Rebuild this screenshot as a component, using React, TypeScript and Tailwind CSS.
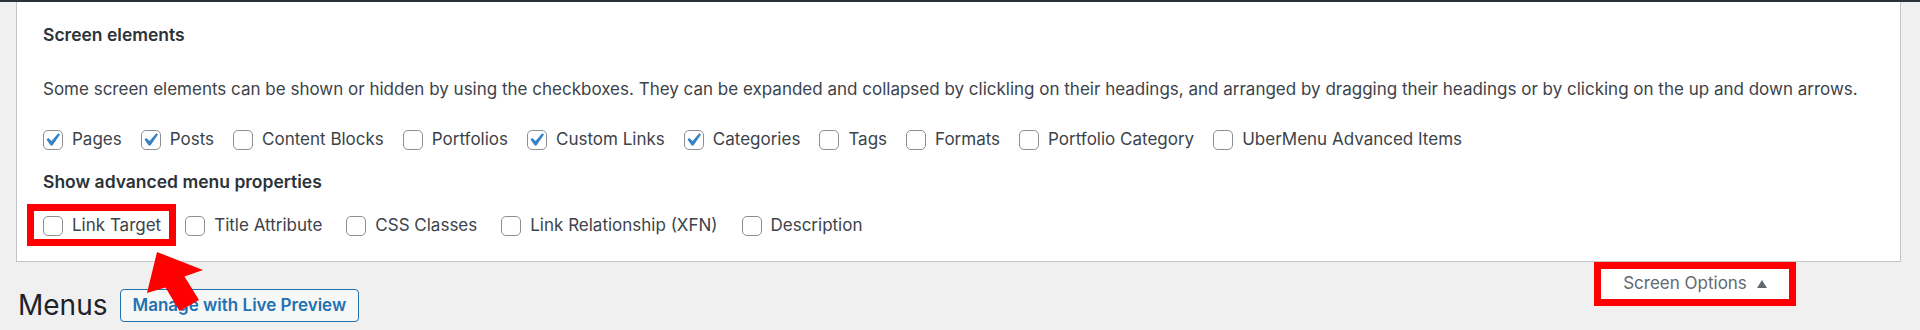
import React from "react";

type Item = { label: string; checked?: boolean; highlight?: boolean };

const screenElements: Item[] = [
  { label: "Pages", checked: true },
  { label: "Posts", checked: true },
  { label: "Content Blocks" },
  { label: "Portfolios" },
  { label: "Custom Links", checked: true },
  { label: "Categories", checked: true },
  { label: "Tags" },
  { label: "Formats" },
  { label: "Portfolio Category" },
  { label: "UberMenu Advanced Items" },
];

const advanced: Item[] = [
  { label: "Link Target", highlight: true },
  { label: "Title Attribute" },
  { label: "CSS Classes" },
  { label: "Link Relationship (XFN)" },
  { label: "Description" },
];

function Checkbox({ checked }: { checked?: boolean }) {
  return (
    <span className="relative block w-[20px] h-[20px] shrink-0 rounded-[5px] border border-[#8c8f94] bg-white">
      {checked && (
        <svg viewBox="0 0 20 20" className="absolute -top-[4px] -left-[5px] w-[26px] h-[26px]">
          <path d="M14.83 4.89l1.34.94-5.81 8.38H9.02L5.78 9.67l1.34-1.25 2.57 2.4z" fill="#3582c4" />
        </svg>
      )}
    </span>
  );
}

function Option({ item }: { item: Item }) {
  return (
    <label className="relative flex items-center gap-[9px] h-6">
      <Checkbox checked={item.checked} />
      <span>{item.label}</span>
      {item.highlight && (
        <span className="absolute -left-[16px] -right-[15px] -top-[10px] -bottom-[8px] border-[7px] border-[#fe0000]" />
      )}
    </label>
  );
}

export default function App() {
  return (
    <div className="relative w-full h-[330px] overflow-hidden bg-[#f0f0f1] font-[family-name:Inter,'Noto_Sans',sans-serif] text-[17px] text-[#3c434a]">
      {/* admin bar edge */}
      <div className="h-[2px] bg-[#2c3338]" />

      {/* Screen options panel */}
      <div className="ml-[16px] mr-[19px] bg-white border-x border-b border-[#c3c4c7] pl-[26px] pt-[21px] pb-[23px]">
        <div className="h-6 leading-6 text-[17.5px] font-semibold text-[#2c3338]">Screen elements</div>
        <p className="mt-[30px] h-6 leading-6">
          Some screen elements can be shown or hidden by using the checkboxes. They can be expanded and collapsed by clickling on their headings, and arranged by dragging their headings or by clicking on the up and down arrows.
        </p>
        <div className="mt-[27px] flex gap-x-[19px]">
          {screenElements.map((it) => (
            <Option key={it.label} item={it} />
          ))}
        </div>
        <div className="mt-[18px] h-6 leading-6 text-[17.5px] font-semibold text-[#2c3338]">Show advanced menu properties</div>
        <div className="mt-[20px] flex gap-x-[24px]">
          {advanced.map((it) => (
            <Option key={it.label} item={it} />
          ))}
        </div>
      </div>

      {/* Heading row + screen options tab */}
      <div className="flex items-start">
        <div className="ml-[18px] mt-[27px] flex items-center gap-[12px]">
          <h1 className="text-[28px] leading-[33px] font-normal text-[#1d2327]">Menus</h1>
          <button className="h-[33px] px-[12px] rounded-[4px] border border-[#2271b1] bg-[#f6f7f7] text-[17px] font-semibold text-[#2271b1]">
            Manage with Live Preview
          </button>
        </div>
        <div className="ml-auto mr-[124px] border-[7px] border-[#fe0000]">
          <div className="h-[30px] w-[188px] bg-white flex items-center justify-center gap-[10px] text-[#646970]">
            <span>Screen Options</span>
            <svg viewBox="0 0 10 8" className="w-[10px] h-[8px]">
              <path d="M5 0L10 8H0z" fill="#646970" />
            </svg>
          </div>
        </div>
      </div>

      {/* annotation arrow */}
      <svg className="absolute left-[140px] top-[245px] w-[70px] h-[75px]" viewBox="0 0 70 75">
        <polygon points="17,7 63,25 44.5,31.4 59,55 39.5,66 25.5,42.6 7,48" fill="#fe0000" />
      </svg>
    </div>
  );
}
